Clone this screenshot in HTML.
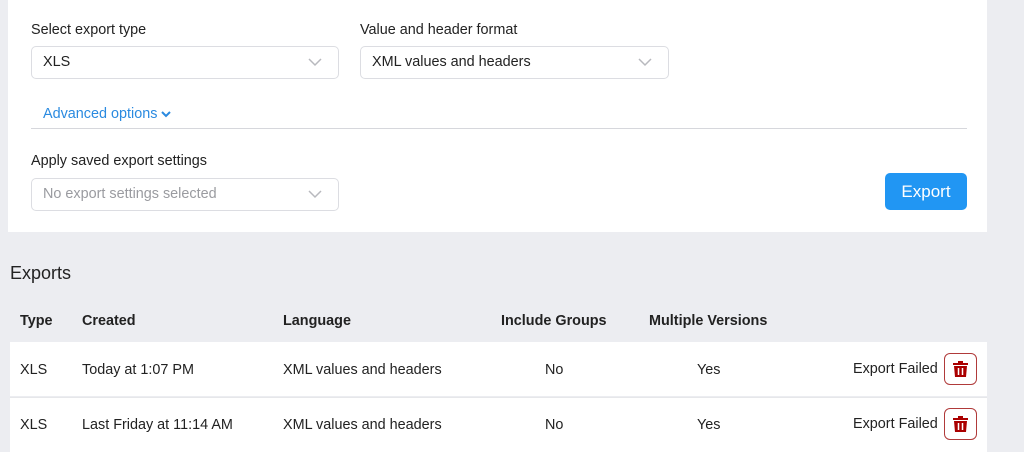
<!DOCTYPE html>
<html><head><style>
body{margin:0;width:1024px;height:450px;background:#ecedf1;font-family:"Liberation Sans",sans-serif;color:#222;overflow:hidden;position:relative}
.abs{position:absolute}
.panel{left:8px;top:0;width:979px;height:232px;background:#fff}
.lbl{font-size:14.4px;color:#222}
.sel{background:#fff;border:1px solid #dcdde2;border-radius:5px;height:31px;box-sizing:border-box;font-size:14.4px;line-height:31px;padding-left:11px}
.chev{position:absolute;right:16px;top:11px}
.btn{left:885px;top:173px;width:82px;height:37px;background:#2196f3;border-radius:5px;color:#fff;font-size:17px;text-align:center;line-height:37px}
.th{font-size:14.4px;font-weight:bold;top:313px}
.row{left:10px;width:977px;height:54px;background:#fff}
.td{font-size:14.4px}
.trash{width:33px;height:32px;border:1px solid #b03a3a;border-radius:6px;box-sizing:border-box;background:#fff}
</style></head><body>
<div class="abs panel"></div>
<div class="abs lbl" style="left:31px;top:22px">Select export type</div>
<div class="abs lbl" style="left:360px;top:22px">Value and header format</div>
<div class="abs sel" style="left:31px;top:46px;width:308px;height:33px">XLS<svg class="chev" width="14" height="9" viewBox="0 0 14 9"><path d="M1 1l6 6 6-6" fill="none" stroke="#b8b9be" stroke-width="1.5"/></svg></div>
<div class="abs sel" style="left:360px;top:46px;width:309px;height:33px">XML values and headers<svg class="chev" width="14" height="9" viewBox="0 0 14 9"><path d="M1 1l6 6 6-6" fill="none" stroke="#b8b9be" stroke-width="1.5"/></svg></div>
<div class="abs" style="left:43px;top:106px;font-size:14.4px;color:#2a8ae0">Advanced options <svg width="10" height="7" viewBox="0 0 10 7"><path d="M1 1l4 4 4-4" fill="none" stroke="#2a8ae0" stroke-width="2"/></svg></div>
<div class="abs" style="left:31px;top:128px;width:936px;height:1px;background:#d6d7dc"></div>
<div class="abs lbl" style="left:31px;top:153px">Apply saved export settings</div>
<div class="abs sel" style="left:31px;top:178px;width:308px;height:33px;color:#9a9ba0">No export settings selected<svg class="chev" width="14" height="9" viewBox="0 0 14 9"><path d="M1 1l6 6 6-6" fill="none" stroke="#b8b9be" stroke-width="1.5"/></svg></div>
<div class="abs btn">Export</div>
<div class="abs" style="left:10px;top:263px;font-size:18px">Exports</div>
<div class="abs th" style="left:20px">Type</div>
<div class="abs th" style="left:82px">Created</div>
<div class="abs th" style="left:283px">Language</div>
<div class="abs th" style="left:501px">Include Groups</div>
<div class="abs th" style="left:649px">Multiple Versions</div>
<div class="abs row" style="top:342px"></div>
<div class="abs row" style="top:397px;border-top:1px solid #e6e7ea"></div>
<div class="abs td" style="left:20px;top:362px">XLS</div>
<div class="abs td" style="left:82px;top:362px">Today at 1:07 PM</div>
<div class="abs td" style="left:283px;top:362px">XML values and headers</div>
<div class="abs td" style="left:545px;top:362px">No</div>
<div class="abs td" style="left:697px;top:362px">Yes</div>
<div class="abs td" style="left:853px;top:361px">Export Failed</div>
<div class="abs td" style="left:20px;top:417px">XLS</div>
<div class="abs td" style="left:82px;top:417px">Last Friday at 11:14 AM</div>
<div class="abs td" style="left:283px;top:417px">XML values and headers</div>
<div class="abs td" style="left:545px;top:417px">No</div>
<div class="abs td" style="left:697px;top:417px">Yes</div>
<div class="abs td" style="left:853px;top:416px">Export Failed</div>
<div class="abs trash" style="left:944px;top:353px"><svg width="31" height="30" viewBox="0 0 31 30"><path d="M8 9h15v2H8zM13 7h5v2h-5zM9 12h13l-1 11H10z" fill="#a00"/><path d="M13.5 14v7M17.5 14v7" stroke="#fff" stroke-width="1.5"/></svg></div>
<div class="abs trash" style="left:944px;top:408px"><svg width="31" height="30" viewBox="0 0 31 30"><path d="M8 9h15v2H8zM13 7h5v2h-5zM9 12h13l-1 11H10z" fill="#a00"/><path d="M13.5 14v7M17.5 14v7" stroke="#fff" stroke-width="1.5"/></svg></div>
</body></html>
